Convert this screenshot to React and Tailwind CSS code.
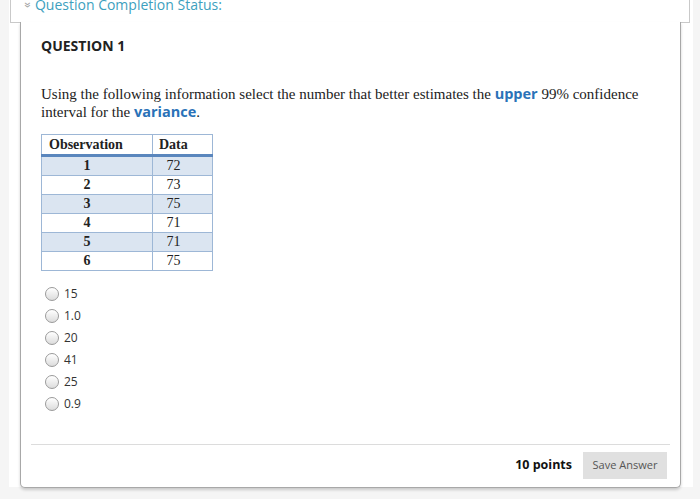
import React from 'react';

const rows = [
  ['1', '72'],
  ['2', '73'],
  ['3', '75'],
  ['4', '71'],
  ['5', '71'],
  ['6', '75'],
];

const choices = ['15', '1.0', '20', '41', '25', '0.9'];

const App = () => {
  return (
    <div className="w-[700px] h-[499px] overflow-hidden bg-[#f5f5f5]">
      <div className="ml-[9px] w-[684px] h-full bg-white">
        {/* Status bar, scrolled partly out of view */}
        <div className="ml-[1px] w-[680px] h-[35px] -mt-[12px] border border-[#c9c9c9] bg-white pl-[14px] pb-[1px] flex items-center gap-[4px] font-['Open_Sans',sans-serif]">
          <span className="text-[#a0a0a0] text-[12px] leading-none rotate-90 inline-block">»</span>
          <span className="text-[#3d9fbe] text-[14px] leading-[18px]">Question Completion Status:</span>
        </div>

        {/* Question card */}
        <div className="ml-[11px] w-[661px] h-[466px] -mt-[1px] border-l border-r border-b border-[#a8a8a8] rounded-b-[5px] bg-white shadow-[0_2px_3px_rgba(0,0,0,0.18)] flex flex-col">
          <div className="pl-[20px] pt-[14px]">
            <h2 className="font-['Open_Sans',sans-serif] font-bold text-[14px] leading-[20px] text-[#222]">QUESTION 1</h2>

            <p className="mt-[29px] w-[610px] font-['Liberation_Serif',serif] text-[15px] leading-[18px] text-[#222]">
              Using the following information select the number that better estimates the{' '}
              <span className="font-['Open_Sans',sans-serif] font-bold text-[14.5px] text-[#2a72b8]">upper</span> 99% confidence interval for the{' '}
              <span className="font-['Open_Sans',sans-serif] font-bold text-[14.5px] text-[#2a72b8]">variance</span>.
            </p>

            <table className="mt-[13px] w-[172px] border-collapse border border-[#9db7d6] font-['Liberation_Serif',serif] text-[14px] text-[#222]">
              <thead>
                <tr className="h-[21px] border-b-[3px] border-[#5a86bd]">
                  <th className="w-[111px] border-r border-[#9db7d6] pl-[7px] text-left font-bold leading-[17px]">Observation</th>
                  <th className="border-r border-[#9db7d6] pl-[6px] text-left font-bold leading-[17px]">Data</th>
                </tr>
              </thead>
              <tbody>
                {rows.map(([obs, val], i) => (
                  <tr key={obs} className={`h-[19px] border-b border-[#9db7d6] ${i % 2 === 0 ? 'bg-[#dbe5f1]' : 'bg-white'}`}>
                    <td className="border-r border-[#9db7d6] text-center pr-[20px] font-bold leading-[18px]">{obs}</td>
                    <td className="text-center pr-[18px] leading-[18px]">{val}</td>
                  </tr>
                ))}
              </tbody>
            </table>

            <div className="mt-[12px] flex flex-col font-['Open_Sans',sans-serif] text-[12px] text-[#333]">
              {choices.map((c) => (
                <label key={c} className="h-[22px] flex items-center gap-[5px] pl-[4px]">
                  <span className="w-[14px] h-[14px] rounded-full border border-[#9a9a9a] bg-gradient-to-b from-white to-[#dcdcdc] shadow-[inset_0_1px_1px_rgba(255,255,255,0.8)]"></span>
                  <span>{c}</span>
                </label>
              ))}
            </div>
          </div>

          {/* Footer */}
          <div className="mt-auto mx-[10px] border-t border-[#dcdcdc] pt-[7px] pb-[8px] flex items-center justify-end gap-[11px] pr-[3px]">
            <span className="font-['Open_Sans',sans-serif] font-bold text-[12.5px] text-[#111]">10 points</span>
            <button className="w-[84px] h-[27px] bg-[#e0e0e0] font-['Open_Sans',sans-serif] text-[11px] text-[#555]">Save Answer</button>
          </div>
        </div>
      </div>
    </div>
  );
};

export default App;
